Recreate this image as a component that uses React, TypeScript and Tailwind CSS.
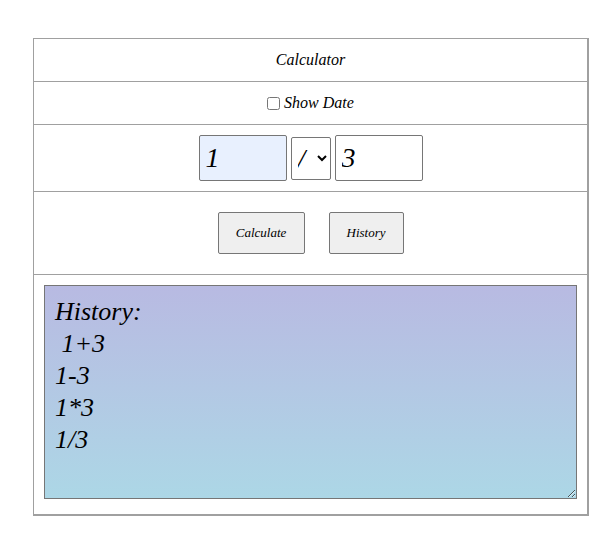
import { useState } from 'react';

export default function App() {
  const [a, setA] = useState('1');
  const [op, setOp] = useState('/');
  const [b, setB] = useState('3');
  const [showDate, setShowDate] = useState(false);
  const [history, setHistory] = useState('History:\n 1+3\n1-3\n1*3\n1/3');

  const calculate = () => {
    setHistory((h) => `${h}\n${a}${op}${b}`);
  };

  return (
    <div className="min-h-[551px] bg-white pt-[38px] pl-[33px] font-['Liberation_Serif',serif] italic text-black">
      <div className="w-[556px] border-t border-l border-r-2 border-b-2 border-[#a0a0a0]">
        {/* Title */}
        <div className="flex h-[43px] items-center justify-center border-b border-[#a0a0a0] text-[16px]">
          Calculator
        </div>

        {/* Date toggle */}
        <div className="flex h-[43px] items-center justify-center gap-[4px] border-b border-[#a0a0a0] text-[16px]">
          <input
            type="checkbox"
            checked={showDate}
            onChange={(e) => setShowDate(e.target.checked)}
            className="m-0 h-[13px] w-[13px]"
          />
          <span>Show Date</span>
          {showDate && <span className="ml-2">{new Date().toLocaleDateString()}</span>}
        </div>

        {/* Operands */}
        <div className="flex h-[67px] items-center justify-center gap-[4px] border-b border-[#a0a0a0]">
          <input
            value={a}
            onChange={(e) => setA(e.target.value)}
            className="h-[46px] w-[88px] rounded-[2px] border border-[#767676] bg-[#e8f0fe] px-[6px] text-[28px] italic outline-none"
          />
          <select
            value={op}
            onChange={(e) => setOp(e.target.value)}
            className="h-[43px] w-[40px] rounded-[2px] border border-[#767676] bg-white pl-[2px] text-[28px] italic outline-none"
          >
            <option value="+">+</option>
            <option value="-">-</option>
            <option value="*">*</option>
            <option value="/">/</option>
          </select>
          <input
            value={b}
            onChange={(e) => setB(e.target.value)}
            className="h-[46px] w-[88px] rounded-[2px] border border-[#767676] bg-white px-[6px] text-[28px] italic outline-none"
          />
        </div>

        {/* Actions */}
        <div className="flex h-[83px] items-center justify-center gap-[24px] border-b border-[#a0a0a0]">
          <button
            onClick={calculate}
            className="h-[42px] w-[87px] rounded-[2px] border border-[#767676] bg-[#efefef] text-[13px] italic"
          >
            Calculate
          </button>
          <button className="h-[42px] w-[75px] rounded-[2px] border border-[#767676] bg-[#efefef] text-[13px] italic">
            History
          </button>
        </div>

        {/* History */}
        <div className="flex h-[239px] items-start px-[10px] pt-[10px]">
          <textarea
            value={history}
            onChange={(e) => setHistory(e.target.value)}
            className="h-[214px] w-[535px] resize border border-[#767676] bg-linear-to-b from-[#b8bae2] to-[#acd7e6] px-[10px] pt-[10px] text-[26px] leading-[32px] italic outline-none"
          />
        </div>
      </div>
    </div>
  );
}
